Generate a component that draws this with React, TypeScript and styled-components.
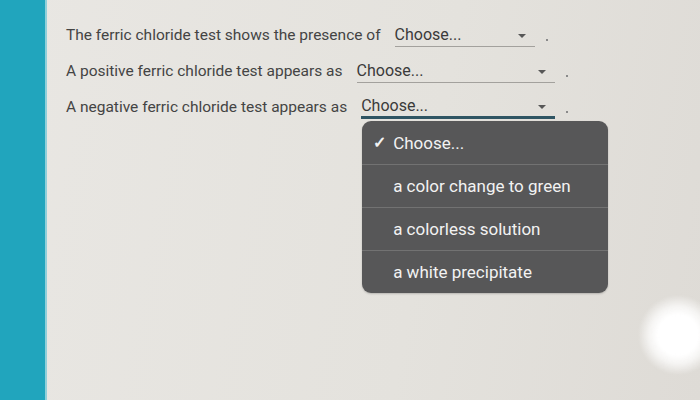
import React from "react";
import styled, { createGlobalStyle } from "styled-components";

type Question = {
  prompt: string;
  width: number;
  focused?: boolean;
};

const questions: Question[] = [
  { prompt: "The ferric chloride test shows the presence of", width: 140 },
  { prompt: "A positive ferric chloride test appears as", width: 198 },
  { prompt: "A negative ferric chloride test appears as", width: 194, focused: true },
];

const options = [
  "a color change to green",
  "a colorless solution",
  "a white precipitate",
];

const GlobalStyle = createGlobalStyle`
  html, body {
    margin: 0;
    padding: 0;
  }
  body {
    font-family: Roboto, "Liberation Sans", sans-serif;
    background: #e5e3de;
  }
`;

const Page = styled.div`
  display: flex;
  width: 700px;
  height: 400px;
  overflow: hidden;
  position: relative;
  background: linear-gradient(100deg, #e9e7e3 0%, #e4e2dd 60%, #dedbd6 100%);
`;

const Sidebar = styled.div`
  width: 45px;
  flex-shrink: 0;
  background: #21a5bd;
  border-right: 2px solid #8fd0da;
`;

const Content = styled.div`
  display: flex;
  flex-direction: column;
  padding: 17px 0 0 19px;
`;

const Row = styled.div`
  display: flex;
  align-items: center;
  height: 36px;
  gap: 14px;
  font-size: 15.5px;
  color: #444444;
`;

const Field = styled.div`
  position: relative;
  display: flex;
  align-items: center;
`;

const Select = styled.div<{ $width: number; $focused?: boolean }>`
  width: ${(p) => p.$width}px;
  height: 24px;
  display: flex;
  align-items: center;
  justify-content: space-between;
  box-sizing: border-box;
  padding-right: 9px;
  font-size: 16px;
  border-bottom: ${(p) => (p.$focused ? "3px solid #2f5563" : "1px solid #a3a19d")};
  color: #3a3a3a;
`;

const Arrow = styled.span`
  width: 0;
  height: 0;
  border-left: 4px solid transparent;
  border-right: 4px solid transparent;
  border-top: 4px solid #575757;
  margin-top: 2px;
`;

const Period = styled.span`
  width: 2px;
  height: 2px;
  margin: 10px 0 0 11px;
  background: #8a8a8a;
`;

const Menu = styled.div`
  position: absolute;
  left: 1px;
  top: 26px;
  width: 246px;
  background: #575758;
  border-radius: 9px;
  overflow: hidden;
  box-shadow: 0 1px 2px rgba(0, 0, 0, 0.2);
  z-index: 2;
`;

const Option = styled.div<{ $first?: boolean }>`
  height: 43px;
  display: flex;
  align-items: center;
  box-sizing: border-box;
  padding-left: ${(p) => (p.$first ? "11px" : "31px")};
  color: #f2f2f2;
  font-size: 17px;
  border-top: ${(p) => (p.$first ? "none" : "1px solid #727272")};
`;

const Check = styled.span`
  width: 20px;
  font-size: 16px;
  font-weight: bold;
`;

const Glare = styled.div`
  position: absolute;
  right: -18px;
  top: 294px;
  width: 80px;
  height: 82px;
  border-radius: 50%;
  background: radial-gradient(circle, #ffffff 0%, #ffffff 35%, rgba(255, 255, 255, 0.7) 50%, rgba(255, 255, 255, 0) 70%);
  filter: blur(1px);
`;

export default function App() {
  return (
    <>
      <GlobalStyle />
      <Page>
        <Sidebar />
        <Content>
          {questions.map((q) => (
            <Row key={q.prompt}>
              <span>{q.prompt}</span>
              <Field>
                <Select $width={q.width} $focused={q.focused}>
                  <span>Choose...</span>
                  <Arrow />
                </Select>
                <Period />
                {q.focused && (
                  <Menu>
                    <Option $first>
                      <Check>✓</Check>Choose...
                    </Option>
                    {options.map((o) => (
                      <Option key={o}>{o}</Option>
                    ))}
                  </Menu>
                )}
              </Field>
            </Row>
          ))}
        </Content>
        <Glare />
      </Page>
    </>
  );
}
